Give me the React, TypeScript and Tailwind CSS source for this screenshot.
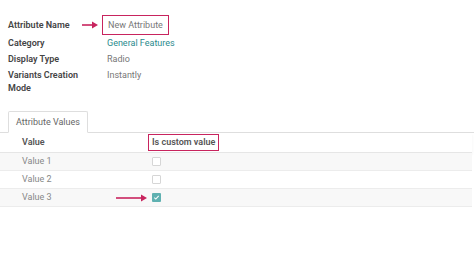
import React from 'react'

const font = { fontFamily: 'Roboto, "Liberation Sans", sans-serif' }

const Arrow = ({ width }: { width: number }) => (
  <svg width={width} height="8" viewBox={`0 0 ${width} 8`} className="block">
    <line x1="0" y1="4" x2={width - 5} y2="4" stroke="#c8245e" strokeWidth="1.6" />
    <path d={`M${width - 6} 0.5 L${width} 4 L${width - 6} 7.5 Z`} fill="#c8245e" />
  </svg>
)

const Checkbox = ({ checked }: { checked?: boolean }) =>
  checked ? (
    <div className="w-[9px] h-[9px] rounded-[1px] bg-[#5fb1b1] flex items-center justify-center">
      <svg width="7" height="7" viewBox="0 0 8 8">
        <path d="M1.5 4.2 L3.2 5.8 L6.5 2.2" stroke="#fff" strokeWidth="1.2" fill="none" />
      </svg>
    </div>
  ) : (
    <div className="w-[9px] h-[9px] rounded-[1px] border border-[#d6d6d6] bg-white" />
  )

export default function App() {
  const rows = [
    { name: 'Value 1', checked: false },
    { name: 'Value 2', checked: false },
    { name: 'Value 3', checked: true },
  ]

  return (
    <div className="w-[474px] h-[257px] bg-white text-[9px] leading-[13px] overflow-hidden" style={font}>
      {/* form fields */}
      <div className="pt-[15px] pl-[8px] flex flex-col">
        <div className="flex items-center">
          <div className="w-[74px] pt-[1px] font-semibold text-[#444]">Attribute Name</div>
          <div className="w-[20px] flex justify-start">
            <Arrow width={16} />
          </div>
          <div className="h-[20px] px-[5px] flex items-center border-[1.5px] border-[#c8245e] text-[#777]">
            New Attribute
          </div>
        </div>
        <div className="flex mt-[2px]">
          <div className="w-[99px] font-semibold text-[#444]">Category</div>
          <div className="text-[#2a8a8d]">General Features</div>
        </div>
        <div className="flex mt-[3px]">
          <div className="w-[99px] font-semibold text-[#444]">Display Type</div>
          <div className="text-[#777]">Radio</div>
        </div>
        <div className="flex mt-[3px]">
          <div className="w-[99px] font-semibold text-[#444]">
            Variants Creation
            <br />
            Mode
          </div>
          <div className="text-[#777]">Instantly</div>
        </div>
      </div>

      {/* tabs */}
      <div className="mt-[16px] pl-[8px] border-b border-[#dedede] flex">
        <div className="h-[22px] px-[7px] pt-[1px] -mb-px flex items-center border border-[#dedede] border-b-white bg-white text-[#666] rounded-t-[2px]">
          Attribute Values
        </div>
      </div>

      {/* table */}
      <div className="w-[472px]">
        <div className="h-[20px] flex items-center border-b border-[#e6e6e6] shadow-[0_2px_3px_rgba(0,0,0,0.05)] font-semibold text-[#555]">
          <div className="w-[148px] pl-[22px]">Value</div>
          <div className="h-[17px] px-[3px] flex items-center border-[1.5px] border-[#c8245e]">Is custom value</div>
        </div>
        {rows.map((r, i) => (
          <div
            key={r.name}
            className={`h-[18px] flex items-center border-b border-[#ececec] text-[#888] ${i % 2 === 0 ? 'bg-[#f8f8f8]' : 'bg-white'}`}
          >
            <div className="w-[116px] pl-[22px]">{r.name}</div>
            <div className="w-[36px] flex">{r.checked && <Arrow width={31} />}</div>
            <Checkbox checked={r.checked} />
          </div>
        ))}
      </div>
    </div>
  )
}
